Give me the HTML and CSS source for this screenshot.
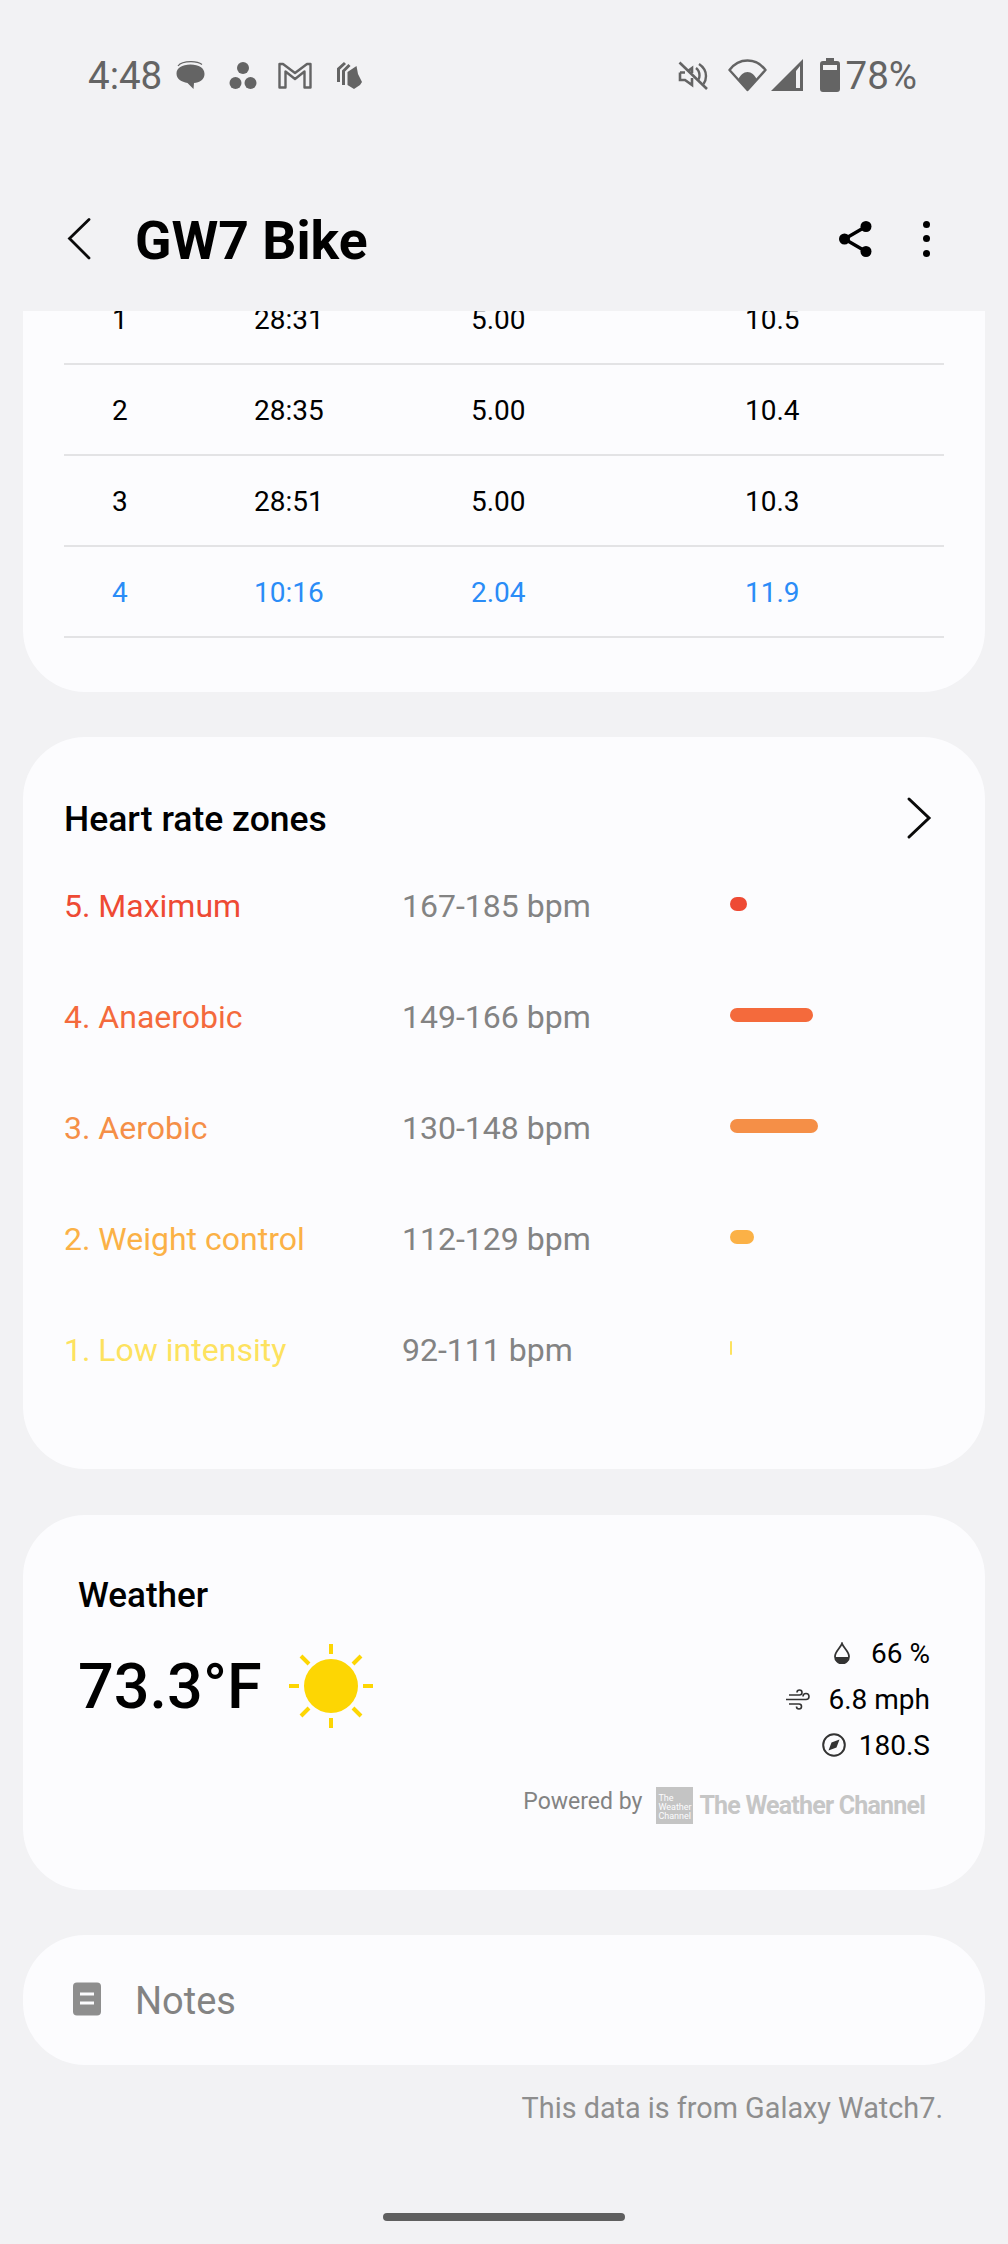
FILE: index.html
```html
<!DOCTYPE html>
<html lang="en">
<head>
    <meta charset="UTF-8">
    <meta name="viewport" content="width=device-width, initial-scale=1.0">
    <title>GW7 Bike</title>
    <link rel="stylesheet" href="styles.css">
</head>
<body>
    <div class="screen">
        <div class="status-bar">
            <div class="status-left">
                <span class="clock">4:48</span>
                <svg class="st-icon" width="29" height="28" viewBox="0 0 29 28"><path d="M2 5C4.500 1.500 9 .7 15 .7c4 0 8 .5 11 2.800" fill="none" stroke="#646464" stroke-width="1.200"/><path d="M14.500 3.500c8.500 0 14 3.500 14 9.500 0 5.500-5 9-10.500 9l-.5 6-6-6C5.500 21 .5 18 .5 12.500.5 7 6 3.500 14.500 3.500z" fill="#646464"/></svg>
                <svg class="st-icon dots-app" width="28" height="27" viewBox="0 0 28 27"><circle cx="14" cy="6" r="6" fill="#646464"/><circle cx="6.500" cy="21" r="6" fill="#646464"/><circle cx="21.500" cy="21" r="6" fill="#646464"/></svg>
                <svg class="st-icon gmail" width="34" height="27" viewBox="0 0 34 27"><path d="M1.500 25.500V2H5l12 9 12-9h3.500v23.500h-6v-16L17 17 7.500 9.500v16z" fill="none" stroke="#646464" stroke-width="2.400" stroke-linejoin="round"/></svg>
                <svg class="st-icon stack" width="25" height="28" viewBox="0 0 25 28"><path d="M1.500 21V8L8 2M6.500 24V10l6-6" fill="none" stroke="#646464" stroke-width="3"/><path d="M10.500 11l9-6 1.500 8 4 8-2 3-6 4-6.500-4z" fill="#646464"/></svg>
            </div>
            <div class="status-right">
                <svg class="st-icon" width="30" height="29" viewBox="0 0 30 29"><path d="M2 11.500V19h5l7 5v-7M14 12V7l-4 3M2 11.500h5" fill="none" stroke="#646464" stroke-width="2.600"/><path d="M18 7c2.500 2 3.500 4.500 3.500 7.500 0 1.500-.5 3-1 4M21 3c4.500 3 7 7 7 12 0 3-1 6-2.500 8" fill="none" stroke="#646464" stroke-width="2.400"/><path d="M1.500 1.500L29 28" stroke="#646464" stroke-width="2.600"/></svg>
                <svg class="st-icon wifi" width="39" height="33" viewBox="0 0 39 33"><path d="M1.500 11C6 5 12 1.500 19.500 1.500S33 5 37.500 11l-18 20z" fill="none" stroke="#646464" stroke-width="2.400" stroke-linejoin="round"/><path d="M10.500 20c2-4 5-7 9-7s7 3 9 7l-9 11z" fill="#646464"/></svg>
                <svg class="st-icon signal" width="32" height="32" viewBox="0 0 32 32"><path d="M32 0v32H0zM29 7l-4 5v17h4z" fill="#646464" fill-rule="evenodd"/></svg>
                <svg class="st-icon battery" width="20" height="34" viewBox="0 0 20 34"><path d="M6 0h8v3h3a3 3 0 0 1 3 3v25a3 3 0 0 1-3 3H3a3 3 0 0 1-3-3V6a3 3 0 0 1 3-3h3z" fill="#646464"/><rect x="3" y="7" width="14" height="5" fill="#f2f2f4"/></svg>
                <span class="battery-pct">78%</span>
            </div>
        </div>

        <div class="app-bar">
            <svg class="back" width="24" height="42" viewBox="0 0 24 42"><path d="M22 1.500L2.500 20.500 22 40" fill="none" stroke="#0a0a0a" stroke-width="2.800" stroke-linecap="round"/></svg>
            <h1 class="title">GW7 Bike</h1>
            <svg class="share" width="33" height="38" viewBox="0 0 33 38"><path d="M27 6.500L5.500 19 27 31.500" fill="none" stroke="#000" stroke-width="3.400"/><circle cx="27" cy="6.500" r="5.500"/><circle cx="5.500" cy="19" r="5.500"/><circle cx="27" cy="31.500" r="5.500"/></svg>
            <div class="more">
                <span></span>
                <span></span>
                <span></span>
            </div>
        </div>

        <div class="scroll">
            <div class="card laps">
                <div class="lap-row">
                    <span>1</span><span>28:31</span><span>5.00</span><span>10.5</span>
                </div>
                <div class="lap-row">
                    <span>2</span><span>28:35</span><span>5.00</span><span>10.4</span>
                </div>
                <div class="lap-row">
                    <span>3</span><span>28:51</span><span>5.00</span><span>10.3</span>
                </div>
                <div class="lap-row lap-best">
                    <span>4</span><span>10:16</span><span>2.04</span><span>11.9</span>
                </div>
            </div>

            <div class="card zones">
                <div class="zones-head">
                    <h2>Heart rate zones</h2>
                    <svg width="26" height="44" viewBox="0 0 26 44"><path d="M3 3l20 19L3 41" fill="none" stroke="#0a0a0a" stroke-width="3" stroke-linecap="round"/></svg>
                </div>
                <div class="zone-row zone-5">
                    <span>5. Maximum</span><span class="bpm">167-185 bpm</span><div class="bar" style="width:17px"></div>
                </div>
                <div class="zone-row zone-4">
                    <span>4. Anaerobic</span><span class="bpm">149-166 bpm</span><div class="bar" style="width:83px"></div>
                </div>
                <div class="zone-row zone-3">
                    <span>3. Aerobic</span><span class="bpm">130-148 bpm</span><div class="bar" style="width:88px"></div>
                </div>
                <div class="zone-row zone-2">
                    <span>2. Weight control</span><span class="bpm">112-129 bpm</span><div class="bar" style="width:24px"></div>
                </div>
                <div class="zone-row zone-1">
                    <span>1. Low intensity</span><span class="bpm">92-111 bpm</span><div class="bar" style="width:2px"></div>
                </div>
            </div>

            <div class="card weather">
                <h2>Weather</h2>
                <div class="weather-main">
                    <div class="temp-wrap">
                        <span class="temp">73.3°F</span>
                        <svg class="sun" width="86" height="86" viewBox="0 0 86 86">
                            <circle cx="43" cy="43" r="27" fill="#fdd603"/>
                            <path d="M43 1v10M43 75v10M1 43h10M75 43h10M13 13l8 8M65 65l8 8M13 73l8-8M65 21l8-8" stroke="#fdd603" stroke-width="4"/>
                        </svg>
                    </div>
                    <div class="conditions">
                        <div class="cond">
                            <svg class="drop" width="16" height="22" viewBox="0 0 16 22"><path d="M8 1.500C6.500 6 1 9.500 1 14.500a7 7 0 0 0 14 0C15 9.500 9.500 6 8 1.500z" fill="none" stroke="#333" stroke-width="1.800"/><path d="M1.500 15h13a6.500 6.500 0 0 1-13 0z" fill="#333"/></svg>
                            <span>66 %</span>
                        </div>
                        <div class="cond">
                            <svg width="25" height="21" viewBox="0 0 25 21"><path d="M3 6h10.500a2.500 2.500 0 1 0-2.500-2.500M0 10.500h20a3 3 0 1 0-3-3M3 15h10a2.500 2.500 0 1 1-2.500 2.500" fill="none" stroke="#333" stroke-width="1.600"/></svg>
                            <span>6.8 mph</span>
                        </div>
                        <div class="cond">
                            <svg class="compass" width="24" height="24" viewBox="0 0 24 24"><circle cx="12" cy="12" r="10.800" fill="none" stroke="#333" stroke-width="2"/><path d="M17.500 6.500l-3 8-8 3 3-8z" fill="#333"/></svg>
                            <span>180.S</span>
                        </div>
                    </div>
                </div>
                <div class="powered">
                    <span class="powered-by">Powered by</span>
                    <div class="twc-box">
                        <span>The</span>
                        <span>Weather</span>
                        <span>Channel</span>
                    </div>
                    <span class="twc-name">The Weather Channel</span>
                </div>
            </div>

            <div class="card notes">
                <svg width="28" height="34" viewBox="0 0 28 34"><rect width="28" height="33" y="0.500" rx="4" fill="#8e8e8e"/><path d="M7 12h14M7 21h14" stroke="#fcfcfe" stroke-width="3"/></svg>
                <span class="notes-label">Notes</span>
            </div>

            <p class="source">This data is from Galaxy Watch7.</p>
        </div>

        <div class="home-bar"></div>
    </div>
</body>
</html>
```

FILE: styles.css
```css
* {
    margin: 0;
    padding: 0;
    box-sizing: border-box;
}

body {
    font-family: Roboto, 'Liberation Sans', sans-serif;
    background: #f2f2f4;
    color: #000;
}

.screen {
    width: 1008px;
    height: 2244px;
    display: flex;
    flex-direction: column;
    overflow: hidden;
}

/* Status bar */
.status-bar {
    height: 150px;
    padding: 54px 91px 0 88px;
    display: flex;
    justify-content: space-between;
    align-items: flex-start;
    color: #646464;
}

.status-left,
.status-right {
    display: flex;
    align-items: center;
    height: 42px;
}

.clock {
    font-size: 38.500px;
    margin-right: 14px;
}

.st-icon {
    flex: none;
}

.dots-app {
    margin-left: 24px;
}

.gmail {
    margin-left: 21px;
}

.stack {
    margin-left: 25px;
}

.wifi {
    margin-left: 20px;
}

.signal {
    margin-left: 4px;
}

.battery {
    margin-left: 17px;
}

.battery-pct {
    font-size: 38.500px;
    margin-left: 6px;
}

/* App bar */
.app-bar {
    height: 161px;
    padding: 18px 78px 0 67px;
    display: flex;
    align-items: center;
}

.back {
    margin-top: -2px;
}

.title {
    font-size: 53.500px;
    font-weight: 700;
    margin: 2px 0 0 44px;
    flex: 1;
}

.share {
    margin-top: -2px;
}

.more {
    display: flex;
    flex-direction: column;
    gap: 7.500px;
    margin: -2px 0 0 51px;
}

.more span {
    width: 7px;
    height: 7px;
    border-radius: 50%;
    background: #000;
}

/* Scrolling content */
.scroll {
    flex: 1;
    overflow: hidden;
    padding: 0 23px;
}

.card {
    background: #fcfcfe;
    border-radius: 62px;
    margin-bottom: 46px;
}

.laps {
    margin-top: -37px;
    margin-bottom: 45px;
    border-radius: 0 0 62px 62px;
    padding: 0 41px 54px;
}

.lap-row {
    height: 91px;
    padding: 2px 0 0 48px;
    display: grid;
    grid-template-columns: 142px 217px 274px 1fr;
    align-items: center;
    font-size: 28px;
    border-bottom: 2px solid #e3e3e5;
}

.lap-best {
    color: #2a8cf7;
}

/* Heart rate zones */
.zones {
    padding: 62px 53px 64px 41px;
}

.zones-head {
    display: flex;
    justify-content: space-between;
    align-items: center;
    height: 40px;
    margin-bottom: 11px;
}

.zones-head svg {
    margin-top: -3px;
}

.zones-head h2 {
    font-size: 35.500px;
    font-weight: 500;
}

.zone-row {
    height: 111px;
    display: grid;
    grid-template-columns: 338px 328px 1fr;
    align-items: center;
    font-size: 32px;
}

.bpm {
    color: #838383;
}

.bar {
    height: 14px;
    border-radius: 7px;
    margin-top: -4px;
    background: currentColor;
}

.zone-5 { color: #ee4a34; }
.zone-4 { color: #f46a3c; }
.zone-3 { color: #f58f47; }
.zone-2 { color: #fbb146; }
.zone-1 { color: #fde25f; }

/* Weather */
.weather {
    height: 375px;
    padding: 60px 55px 0;
    margin-bottom: 45px;
}

.weather h2 {
    font-size: 35px;
    font-weight: 500;
}

.weather-main {
    display: flex;
    justify-content: space-between;
    margin-top: 15px;
}

.temp-wrap {
    display: flex;
    align-items: center;
    height: 90px;
    margin-top: 10px;
}

.temp {
    font-size: 63px;
    font-weight: 500;
}

.sun {
    margin-left: 26px;
}

.conditions {
    display: flex;
    flex-direction: column;
    align-items: flex-end;
    gap: 2px;
    font-size: 28px;
}

.cond {
    display: flex;
    align-items: center;
    gap: 18px;
    height: 44px;
}

.drop {
    margin-right: 3px;
}

.compass {
    margin-right: -5px;
}

.powered {
    display: flex;
    align-items: center;
    justify-content: flex-end;
    margin-top: 20px;
}

.powered-by {
    font-size: 23px;
    color: #838383;
    margin-right: 14px;
    margin-top: -9px;
}

.twc-box {
    width: 37px;
    height: 37px;
    background: #c4c4c4;
    color: #fcfcfe;
    font-size: 9px;
    line-height: 9px;
    padding: 7px 0 0 2px;
    display: flex;
    flex-direction: column;
}

.twc-name {
    font-size: 25px;
    font-weight: 700;
    color: #c6c6c6;
    margin-left: 6px;
    letter-spacing: -0.800px;
    margin-right: 5px;
}

/* Notes */
.notes {
    height: 130px;
    padding-left: 50px;
    margin-bottom: 0;
    display: flex;
    align-items: center;
    gap: 34px;
    font-size: 38px;
    color: #838383;
}

.notes svg {
    margin-top: -3px;
}

.notes-label {
    margin-top: 2px;
}

.source {
    text-align: right;
    font-size: 28.800px;
    color: #8e8e8e;
    padding: 26px 42px 0 0;
}

.home-bar {
    width: 242px;
    height: 8px;
    border-radius: 4px;
    background: #5f5f5f;
    margin: 0 auto 23px;
}
```
